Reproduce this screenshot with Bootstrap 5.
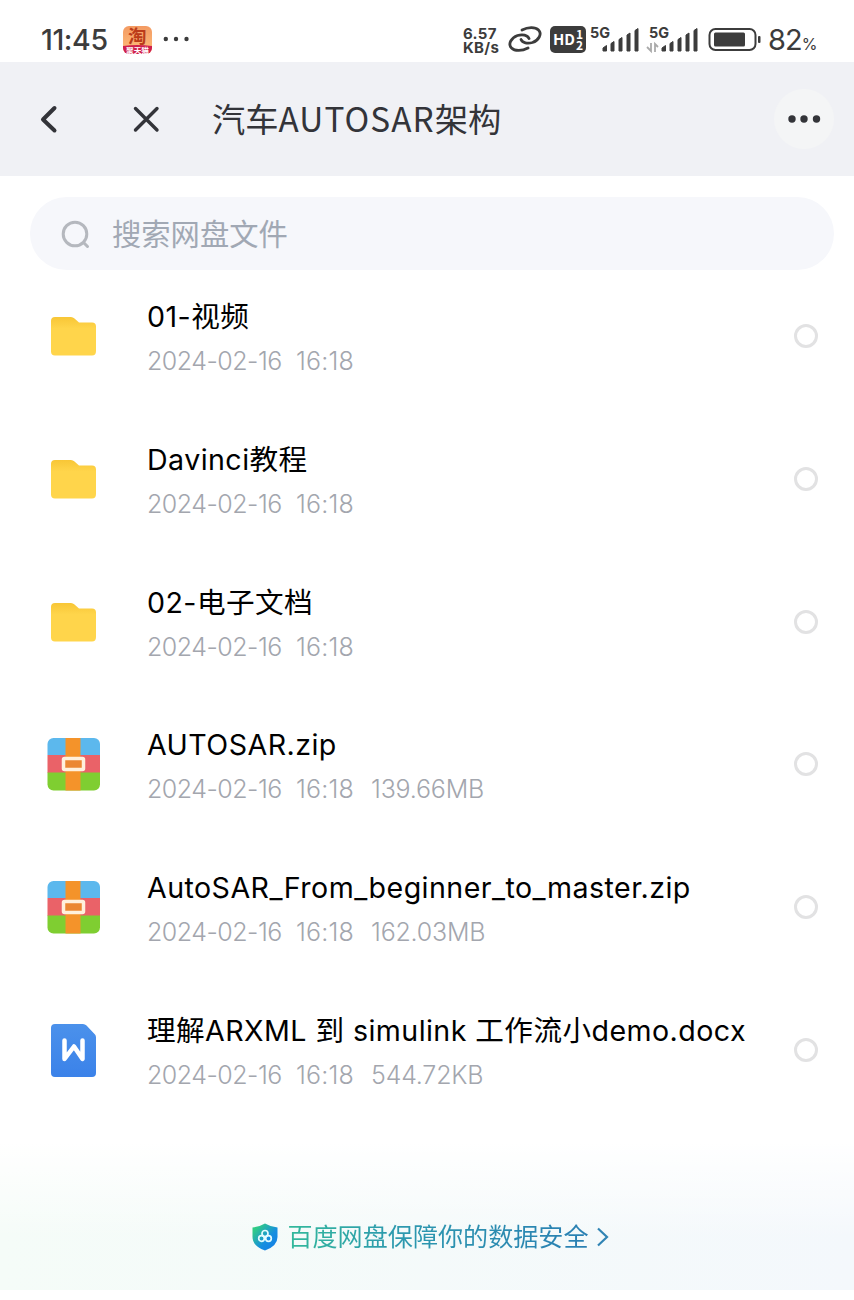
<!DOCTYPE html>
<html lang="zh-CN">
<head>
<meta charset="utf-8">
<meta name="viewport" content="width=device-width, initial-scale=1">
<title>汽车AUTOSAR架构</title>
<link href="https://cdn.jsdelivr.net/npm/bootstrap@5.3.0/dist/css/bootstrap.min.css" rel="stylesheet">
<style>
body{font-family:Inter,"Noto Sans CJK SC",sans-serif;background:#fff;width:854px;height:1300px;overflow:hidden;color:#000}
svg{display:block;flex:none;overflow:visible}
.status{height:62px;padding-top:18px;color:#3c3c3c}
.clock{font:500 28.5px/44px Inter,sans-serif;width:68px;white-space:nowrap;letter-spacing:-.4px}
.speed{font:700 15px/14px Inter,sans-serif;width:39px;white-space:nowrap;letter-spacing:.3px}
.level{font:400 29px/44px Inter,sans-serif;white-space:nowrap;letter-spacing:-1px}
.level small{font-size:16px}
.topbar{height:114px;background:#f0f1f5;color:#333439}
.topbar h1{font:400 33.3px/50px "Noto Sans CJK SC",sans-serif;padding-bottom:3px}
.topbar h1 span{letter-spacing:1.05px}
.more{width:60px;height:60px;background:#f4f5f6}
.search{height:73px;margin:21px 20px 0 30px;border-radius:37px;background:#f6f7fb;color:#a1a8b4;font:400 29.3px/44px "Noto Sans CJK SC",sans-serif}
.search span{padding-bottom:4px}
.files{margin-top:-5px}
.file{height:142.8px;padding:24px 36px 0 43px}
.pic{width:60px;height:60px;margin-top:17px}
.info{margin-left:44px;white-space:nowrap}
.name{font-size:28.6px;line-height:44px;height:44px;margin-top:6px;letter-spacing:.44px}
.meta{font-size:25px;line-height:36px;height:36px;margin-top:4px;color:#a3a6ae;font-weight:350}
.meta span{display:inline-block;letter-spacing:-.2px}
.meta .day{width:149px;letter-spacing:-.5px}.meta .time{width:75px;letter-spacing:.2px}
.pick{width:24px;height:24px;border:3.5px solid #e2e2e3;border-radius:50%;margin-top:35px}
.foot{height:148px;margin-top:20px;padding:42px 0 0 8px;background:linear-gradient(180deg,#fff,#fff0 65%),linear-gradient(90deg,#f5fcf8,#f4f8fc)}
.promise{font:400 25.1px/38px "Noto Sans CJK SC",sans-serif;padding-bottom:3px;background:linear-gradient(90deg,#32b99b,#2d9aae 35%,#2a7fb3);-webkit-background-clip:text;background-clip:text;color:transparent}
</style>
</head>
<body class="d-flex flex-column">
<svg width="0" height="0" class="position-absolute">
<defs>
<linearGradient id="sh" x1="0" y1="0" x2="1" y2="1"><stop offset=".15" stop-color="#2fcb85"/><stop offset=".6" stop-color="#168ee0"/><stop offset="1" stop-color="#147be6"/></linearGradient>
<linearGradient id="fd" x1="0" y1="0" x2="0" y2="1"><stop stop-color="#f8c636"/><stop offset=".3" stop-color="#ffd54b"/></linearGradient>
<linearGradient id="dc" x1="0" y1="0" x2="0" y2="1"><stop stop-color="#4b91eb"/><stop offset="1" stop-color="#3b82e9"/></linearGradient>
<linearGradient id="tb" x1="0" y1="0" x2="0" y2="1"><stop stop-color="#f39a62"/><stop offset="1" stop-color="#ffc07c"/></linearGradient>
<clipPath id="zc"><rect x="4.500" y="4" width="52.500" height="52.500" rx="6"/></clipPath>
<clipPath id="tc"><rect width="29" height="28" rx="6"/></clipPath>
<symbol id="folder" viewBox="0 0 60 60"><path d="M8 15q0-4 4-4h16q2 0 3.500 1.500l4.500 4H49q4 0 4 4V45q0 4.500-4 4.500H12q-4 0-4-4z" fill="url(#fd)"/></symbol>
<symbol id="zip" viewBox="0 0 60 60"><g clip-path="url(#zc)"><path fill="#5cb8ed" d="M4 4h54v17H4z"/><path fill="#ea6268" d="M4 21h54v18H4z"/><path fill="#7fce31" d="M4 38.500h54V57H4z"/><path fill="#f4932a" d="M22.500 4h15v53h-15z"/></g><rect x="20.500" y="24.500" width="20" height="11" rx="1" fill="#eb8732" stroke="#fff0dc" stroke-width="3.500"/></symbol>
<symbol id="doc" viewBox="0 0 60 60"><path d="M12 4h28q2 0 3.500 1.500l8.500 9q1 1 1 3V53q0 4-4 4H12q-4 0-4-4V8q0-4 4-4z" fill="url(#dc)"/><path d="M21.500 20.500v18.500L31 26.500l8.500 12.500v-18.500" fill="none" stroke="#fff" stroke-width="4.500" stroke-linejoin="round" stroke-linecap="round"/></symbol>
<symbol id="bars" viewBox="0 0 38 26"><path fill="#3c3c3c" stroke="#3c3c3c" stroke-linejoin="round" d="M1 21l3.500-2.500V24H1zM9 16.500l3-2V24H9zM17 12.500l3-2V24h-3zM25 8l3-2v18h-3zM33 3.500l3-2V24h-3z"/></symbol>
</defs>
</svg>

<header class="status d-flex position-relative">
<div class="clock" style="margin-left:41px">11:45</div>
<svg width="29" height="28" style="margin:8px 0 0 14px"><g clip-path="url(#tc)"><path fill="url(#tb)" d="M0 0h29v28H0z"/><path fill="#cf204d" d="M0 20q14-2 29 0v8H0z"/></g><text x="5" y="17" font-family="Noto Sans CJK SC" font-weight="700" font-size="18.500" fill="#bb3c19">淘</text><text x="3" y="26.500" font-family="Noto Sans CJK SC" font-weight="700" font-size="7" textLength="23" lengthAdjust="spacingAndGlyphs" fill="#fff">聚天猫</text></svg>
<svg width="28" height="6" style="margin:18px 0 0 11px" fill="#3c3c3c"><circle cx="2.800" cy="3" r="2.200"/><circle cx="13" cy="3" r="2.200"/><circle cx="23.500" cy="3" r="2.200"/></svg>
<div class="speed" style="margin:9px 0 0 272px">6.57<br>KB/s</div>
<svg width="34" height="28" viewBox="0 0 34 28" style="margin:7px 0 0 7px" fill="none" stroke="#3c3c3c" stroke-width="2.800" stroke-linecap="round"><path d="M13 5C19 2 26 1.500 29.500 5c4 4 0 10.500-6 12.500-5 1.500-10 .500-11.500-3"/><path d="M19 23C13 26 6 26.500 2.500 23c-4-4 0-10.500 6-12.500 5-1.500 10-.500 11.500 3"/></svg>
<svg width="36" height="27" style="margin:8px 0 0 7px"><rect width="36" height="27" rx="5" fill="#3c3c3c"/><g fill="#fff" font-family="Noto Sans CJK SC" font-weight="700"><text x="3" y="19" font-size="15" textLength="22" lengthAdjust="spacingAndGlyphs">HD</text><text x="26" y="12.500" font-size="12">1</text><text x="26" y="24" font-size="12">2</text></g></svg>
<svg width="52" height="30" style="margin:7px 0 0 4px"><text x="0" y="13" font-family="Inter" font-weight="700" font-size="15" textLength="20" lengthAdjust="spacingAndGlyphs" fill="#3c3c3c">5G</text><use href="#bars" x="12" y="2" width="38" height="26"/></svg>
<svg width="54" height="30" style="margin:7px 0 0 5px"><text x="2" y="13" font-family="Inter" font-weight="700" font-size="15" textLength="20" lengthAdjust="spacingAndGlyphs" fill="#3c3c3c">5G</text><path d="M4 18v8l-4-4M8 27v-8l3 3" stroke="#aaa" stroke-width="1.800" fill="none"/><use href="#bars" x="14" y="2" width="38" height="26"/></svg>
<svg width="54" height="25" style="margin:9px 0 0 7px"><rect x="1.500" y="2" width="46" height="21" rx="6" fill="none" stroke="#3c3c3c" stroke-width="2"/><rect x="6" y="5.500" width="31" height="14" rx="1.500" fill="#3c3c3c"/><rect x="50" y="9" width="2.500" height="7" rx="1" fill="#3c3c3c"/></svg>
<div class="level" style="margin-left:6px">82<small>%</small></div>
</header>

<nav class="topbar d-flex align-items-center">
<svg width="20" height="30" style="margin-left:39px" fill="none" stroke="#333439" stroke-width="4" stroke-linecap="round" stroke-linejoin="round"><path d="M15.500 4L4 15.500l11.500 11"/></svg>
<svg width="28" height="28" style="margin-left:73px" fill="none" stroke="#333439" stroke-width="3.400" stroke-linecap="round"><path d="M3.500 3.500l21.500 21.500M25 3.500L3.500 25"/></svg>
<h1 class="mb-0" style="margin-left:52px">汽车<span>AUTOSAR</span>架构</h1>
<div class="more rounded-circle d-flex align-items-center justify-content-center ms-auto" style="margin-right:20px"><svg width="34" height="8" fill="#333439"><circle cx="5" cy="4" r="3.700"/><circle cx="17" cy="4" r="3.700"/><circle cx="29.500" cy="4" r="3.700"/></svg></div>
</nav>

<div class="search d-flex align-items-center">
<svg width="32" height="32" style="margin:2px 20px 0 30px" fill="none" stroke="#b5b8be" stroke-width="3" stroke-linecap="round"><circle cx="15" cy="15" r="11.800"/><path d="M24 24l3.500 3.500"/></svg>
<span>搜索网盘文件</span>
</div>

<main class="files">
<div class="file d-flex"><svg class="pic"><use href="#folder"/></svg><div class="info"><div class="name">01-视频</div><div class="meta"><span class="day">2024-02-16</span><span class="time">16:18</span></div></div><div class="pick ms-auto"></div></div>
<div class="file d-flex"><svg class="pic"><use href="#folder"/></svg><div class="info"><div class="name">Davinci教程</div><div class="meta"><span class="day">2024-02-16</span><span class="time">16:18</span></div></div><div class="pick ms-auto"></div></div>
<div class="file d-flex"><svg class="pic"><use href="#folder"/></svg><div class="info"><div class="name">02-电子文档</div><div class="meta"><span class="day">2024-02-16</span><span class="time">16:18</span></div></div><div class="pick ms-auto"></div></div>
<div class="file d-flex"><svg class="pic"><use href="#zip"/></svg><div class="info"><div class="name">AUTOSAR.zip</div><div class="meta"><span class="day">2024-02-16</span><span class="time">16:18</span><span>139.66MB</span></div></div><div class="pick ms-auto"></div></div>
<div class="file d-flex"><svg class="pic"><use href="#zip"/></svg><div class="info"><div class="name">AutoSAR_From_beginner_to_master.zip</div><div class="meta"><span class="day">2024-02-16</span><span class="time">16:18</span><span>162.03MB</span></div></div><div class="pick ms-auto"></div></div>
<div class="file d-flex"><svg class="pic"><use href="#doc"/></svg><div class="info"><div class="name">理解ARXML 到 simulink 工作流小demo.docx</div><div class="meta"><span class="day">2024-02-16</span><span class="time">16:18</span><span>544.72KB</span></div></div><div class="pick ms-auto"></div></div>
</main>

<footer class="foot d-flex justify-content-center align-items-center">
<svg width="26" height="28" viewBox="0 0 26 28"><path d="M13 .500q6 3.500 12.500 4V14q0 9-12.500 13.500Q.500 23 .500 14V4.500Q7 4 13 .500z" fill="url(#sh)"/><g fill="none" stroke="#e3fbff" stroke-width="1.700"><circle cx="13" cy="10.500" r="3"/><circle cx="9.500" cy="15.500" r="2.800"/><circle cx="16.500" cy="15.500" r="2.800"/></g></svg>
<span class="promise" style="margin-left:9px">百度网盘保障你的数据安全</span>
<svg width="14" height="20" style="margin-left:7px" fill="none" stroke="#3184b4" stroke-width="2.200"><path d="M2 1.500l9 8.500-9 8.500"/></svg>
</footer>
<script src="https://cdn.jsdelivr.net/npm/bootstrap@5.3.0/dist/js/bootstrap.bundle.min.js"></script>
</body>
</html>
